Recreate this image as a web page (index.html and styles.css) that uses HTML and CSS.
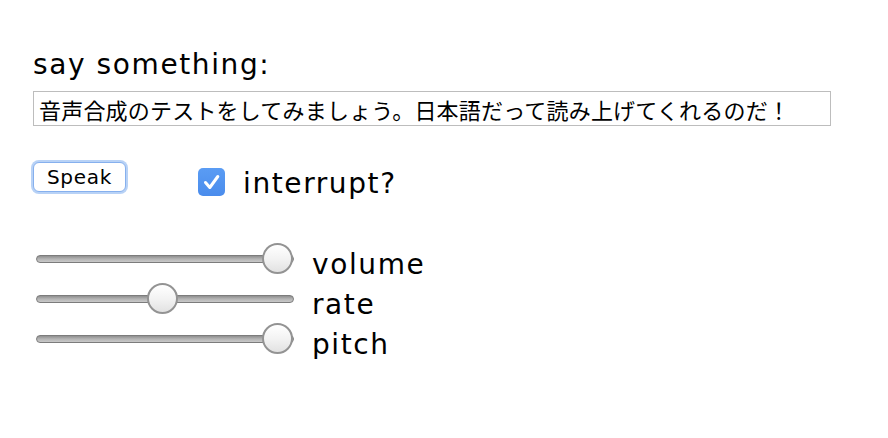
FILE: index.html
```html
<!DOCTYPE html>
<html lang="ja">
<head>
<meta charset="utf-8">
<title>Speech Synthesis</title>
<link rel="stylesheet" href="styles.css">
</head>
<body>
<main class="page">
  <label class="prompt" for="msg">say something:</label>
  <input id="msg" class="msg" type="text" value="音声合成のテストをしてみましょう。日本語だって読み上げてくれるのだ！">
  <div class="actions">
    <button class="speak" type="button">Speak</button>
    <label class="check">
      <span class="box">
        <svg viewBox="0 0 27 28" width="27" height="28" aria-hidden="true"><path d="M7.5 14.5 L11.8 19.5 L19.8 8.5" fill="none" stroke="#fff" stroke-width="3" stroke-linecap="round" stroke-linejoin="round"/></svg>
      </span>
      <span class="check-text">interrupt?</span>
    </label>
  </div>
  <div class="sliders">
    <div class="slider-row">
      <input class="range" type="range" min="0" max="1" step="0.01" value="1">
      <span class="slider-label">volume</span>
    </div>
    <div class="slider-row">
      <input class="range" type="range" min="0" max="2" step="0.01" value="0.98">
      <span class="slider-label">rate</span>
    </div>
    <div class="slider-row">
      <input class="range" type="range" min="0" max="2" step="0.01" value="2">
      <span class="slider-label">pitch</span>
    </div>
  </div>
</main>
</body>
</html>
```
FILE: styles.css
```css
html, body {
  margin: 0;
  padding: 0;
  background: #fff;
}

.page {
  padding-left: 33px;
  font-family: "DejaVu Sans", "Noto Sans CJK JP", sans-serif;
  color: #000;
}

.prompt {
  display: block;
  margin-top: 48px;
  font-size: 28px;
  line-height: 34px;
  letter-spacing: 1.6px;
}

.msg {
  display: block;
  box-sizing: border-box;
  margin: 9px 0 0 0;
  width: 798px;
  height: 35px;
  padding: 0 5px;
  border: 1px solid #bdbdbd;
  border-radius: 0;
  outline: none;
  background: #fff;
  color: #000;
  font-family: "Noto Sans CJK JP", sans-serif;
  font-size: 22px;
  letter-spacing: 0.2px;
}

.actions {
  display: flex;
  align-items: flex-start;
  height: 32px;
  margin-top: 36px;
}

.speak {
  box-sizing: border-box;
  width: 93px;
  height: 30px;
  margin: 0;
  padding: 0;
  border: 1px solid #86b0ee;
  border-radius: 6px;
  box-shadow: 0 0 0 2px #b8d2f6;
  background: #fff;
  color: #000;
  font-family: "DejaVu Sans", sans-serif;
  font-size: 20px;
  letter-spacing: 0.7px;
  display: flex;
  align-items: center;
  justify-content: center;
}

.check {
  display: flex;
  align-items: flex-start;
  margin-left: 72px;
}

.box {
  display: block;
  width: 27px;
  height: 28px;
  margin-top: 6px;
  border-radius: 5px;
  background: linear-gradient(#5a9cf4, #4a8cec);
}

.box svg {
  display: block;
}

.check-text {
  margin-left: 18px;
  margin-top: 5px;
  font-size: 28px;
  line-height: 34px;
  letter-spacing: 1.6px;
}

.sliders {
  margin-top: 45px;
}

.slider-row {
  display: flex;
  align-items: flex-start;
  height: 40px;
}

.range {
  -webkit-appearance: none;
  appearance: none;
  width: 258px;
  height: 40px;
  margin: 0 0 0 3px;
  padding: 0;
  background: transparent;
}

.range:focus {
  outline: none;
}

.range::-webkit-slider-runnable-track {
  box-sizing: border-box;
  height: 8px;
  border: 1px solid #7c7c7c;
  border-radius: 4px;
  background: linear-gradient(#8f8f8f, #b4b4b4 50%, #c9c9c9);
}

.range::-webkit-slider-thumb {
  -webkit-appearance: none;
  appearance: none;
  box-sizing: border-box;
  width: 31px;
  height: 31px;
  margin-top: -13.5px;
  border: 2px solid #939393;
  border-radius: 50%;
  background: linear-gradient(#ffffff, #f3f3f3 50%, #e2e2e2);
}

.slider-label {
  margin-left: 18px;
  margin-top: 9px;
  font-size: 28px;
  line-height: 34px;
  letter-spacing: 1.6px;
}
```
